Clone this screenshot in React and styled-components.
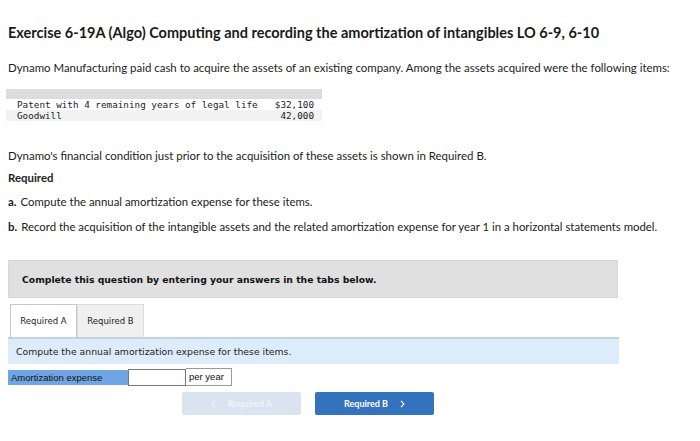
import React from "react";
import styled, { createGlobalStyle } from "styled-components";

const Global = createGlobalStyle`
  html, body { margin: 0; padding: 0; background: #fff; }
  body { font-family: Lato, "Open Sans", sans-serif; color: #222; }
`;

const Page = styled.div`
  width: 700px;
  height: 441px;
  padding: 0 0 0 8px;
  box-sizing: border-box;
  overflow: hidden;
`;

const Title = styled.h1`
  margin: 0;
  padding-top: 24px;
  font-size: 14.5px;
  line-height: 18px;
  font-weight: 700;
  color: #1a1a1a;
`;

const Para = styled.p`
  margin: ${(p) => p.$mt || 0}px 0 0;
  font-size: 11.45px;
  line-height: 14px;
  color: #222;
  white-space: nowrap;
`;

const Strong = styled.p`
  margin: ${(p) => p.$mt || 0}px 0 0;
  font-size: 11.4px;
  line-height: 14px;
  font-weight: 700;
`;

const Item = styled.p`
  margin: ${(p) => p.$mt || 0}px 0 0;
  font-size: 11.4px;
  line-height: 14px;
  white-space: nowrap;
  b { font-weight: 700; margin-right: 4px; }
`;

const DataTable = styled.div`
  margin: 14px 0 0 -2px;
  width: 316px;
  font-family: "DejaVu Sans Mono", monospace;
  font-size: 9.3px;
  color: #222;
`;

const TableHead = styled.div`
  height: 10px;
  background: #dcdde0;
`;

const TableRow = styled.div`
  display: flex;
  justify-content: space-between;
  height: 11px;
  line-height: 11px;
  padding: 0 8px 0 11px;
  background: ${(p) => (p.$alt ? "#f2f2f2" : "#fff")};
  &:first-of-type { margin-top: 2px; }
`;

const Box = styled.div`
  margin-top: 26px;
  width: 610px;
  height: 38px;
  background: #e0e0e0;
  border: 1px solid #d6d6d6;
  box-sizing: border-box;
  display: flex;
  align-items: center;
  padding-left: 13px;
  font-family: "DejaVu Sans", Verdana, sans-serif;
  font-weight: 700;
  font-size: 9.25px;
  color: #111;
`;

const Tabs = styled.div`
  display: flex;
  margin: 6px 0 0 2px;
  font-family: "DejaVu Sans", Verdana, sans-serif;
  font-size: 8.5px;
`;

const Tab = styled.div`
  width: 67px;
  height: 33px;
  box-sizing: border-box;
  display: flex;
  align-items: center;
  justify-content: center;
  border: 1px solid ${(p) => (p.$active ? "#c8c8c8" : "#dcdcdc")};
  border-bottom: none;
  background: ${(p) => (p.$active ? "#fff" : "#f0f0f0")};
  color: #222;
`;

const Instruction = styled.div`
  width: 611px;
  height: 27px;
  box-sizing: border-box;
  background: #dcecfa;
  border-top: 2px solid #c5d3df;
  display: flex;
  align-items: center;
  padding-left: 8px;
  font-family: "DejaVu Sans", Verdana, sans-serif;
  font-size: 9.3px;
  color: #222;
`;

const AnswerRow = styled.div`
  display: flex;
  align-items: center;
  margin-top: 4px;
  font-family: "Liberation Sans", Arial, sans-serif;
  font-size: 9.5px;
`;

const Label = styled.div`
  width: 120px;
  height: 15px;
  line-height: 15px;
  background: #6fa5e3;
  padding-left: 3px;
  box-sizing: border-box;
  color: #111;
`;

const Input = styled.div`
  width: 58px;
  height: 17px;
  box-sizing: border-box;
  border: 1px solid #777;
  background: #fff;
`;

const Unit = styled.div`
  width: 46px;
  height: 18px;
  box-sizing: border-box;
  border: 1px solid #999;
  border-left: none;
  padding-left: 3px;
  line-height: 16px;
  color: #111;
`;

const Nav = styled.div`
  display: flex;
  gap: 14px;
  margin: 6px 0 0 174px;
`;

const NavButton = styled.div`
  width: 119px;
  height: 23px;
  border-radius: 2px;
  display: flex;
  align-items: center;
  justify-content: center;
  gap: 12px;
  font-family: Lato, sans-serif;
  font-weight: 700;
  font-size: 9px;
  color: ${(p) => (p.$disabled ? "#eef3fa" : "#fff")};
  background: ${(p) => (p.$disabled ? "#dae4f1" : "#3572bd")};
`;

const Chevron = ({ dir }) => (
  <svg width="5" height="8" viewBox="0 0 5 8">
    <path
      d={dir === "left" ? "M4 0.8 L1 4 L4 7.2" : "M1 0.8 L4 4 L1 7.2"}
      fill="none"
      stroke="currentColor"
      strokeWidth="1.1"
    />
  </svg>
);

export default function App() {
  return (
    <Page>
      <Global />
      <Title>
        Exercise 6-19A (Algo) Computing and recording the amortization of intangibles LO 6-9, 6-10
      </Title>
      <Para $mt={19}>
        Dynamo Manufacturing paid cash to acquire the assets of an existing company. Among the assets acquired were the following items:
      </Para>
      <DataTable>
        <TableHead />
        <TableRow>
          <span>Patent with 4 remaining years of legal life</span>
          <span>$32,100</span>
        </TableRow>
        <TableRow $alt>
          <span>Goodwill</span>
          <span>42,000</span>
        </TableRow>
      </DataTable>
      <Para $mt={28}>
        Dynamo's financial condition just prior to the acquisition of these assets is shown in Required B.
      </Para>
      <Strong $mt={8}>Required</Strong>
      <Item $mt={10}>
        <b>a.</b>Compute the annual amortization expense for these items.
      </Item>
      <Item $mt={11}>
        <b>b.</b>Record the acquisition of the intangible assets and the related amortization expense for year 1 in a horizontal statements model.
      </Item>
      <Box>Complete this question by entering your answers in the tabs below.</Box>
      <Tabs>
        <Tab $active>Required A</Tab>
        <Tab>Required B</Tab>
      </Tabs>
      <Instruction>Compute the annual amortization expense for these items.</Instruction>
      <AnswerRow>
        <Label>Amortization expense</Label>
        <Input />
        <Unit>per year</Unit>
      </AnswerRow>
      <Nav>
        <NavButton $disabled>
          <Chevron dir="left" />
          Required A
        </NavButton>
        <NavButton>
          Required B
          <Chevron dir="right" />
        </NavButton>
      </Nav>
    </Page>
  );
}
